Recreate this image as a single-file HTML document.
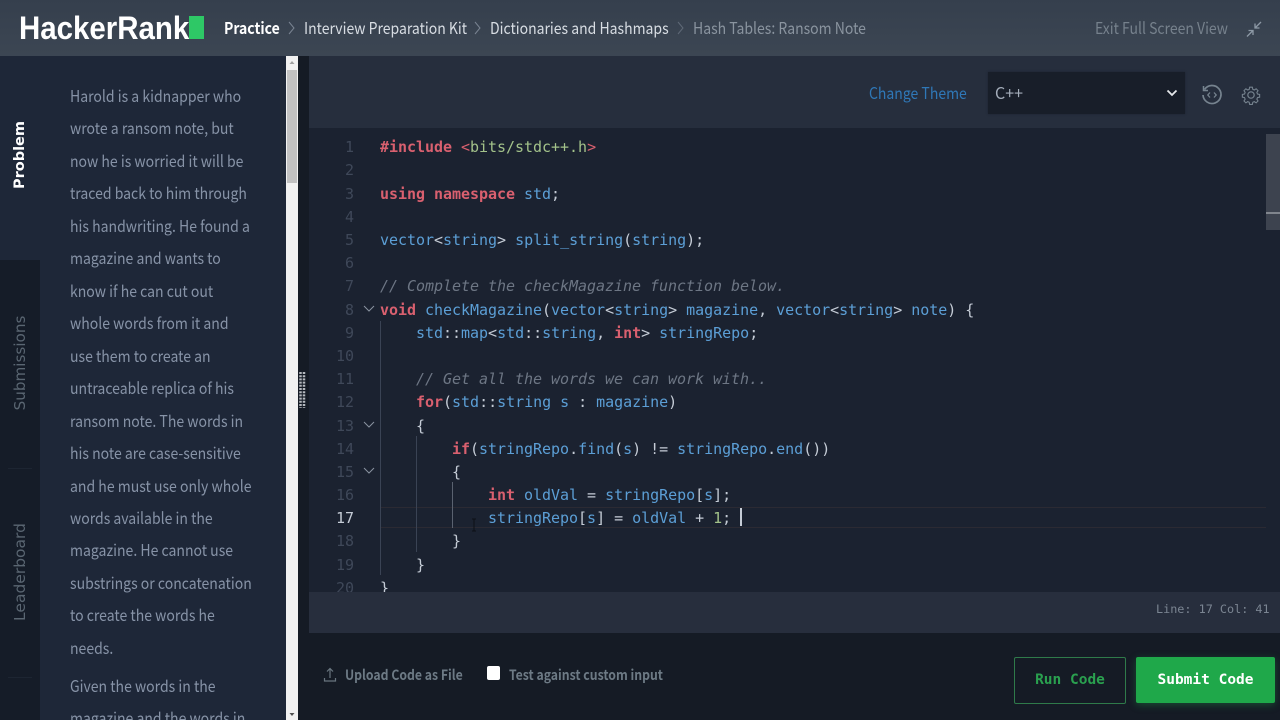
<!DOCTYPE html>
<html><head><meta charset="utf-8"><style>
html,body{margin:0;padding:0;background:#151b25}
#r{position:relative;width:1280px;height:720px;overflow:hidden;background:#151b25;font-family:"Noto Sans CJK JP","Liberation Sans",sans-serif}
#r div,#r svg{position:absolute}
.t{white-space:nowrap}
.sx{transform:scaleX(.875);transform-origin:0 50%}
.nav{top:16px;font-size:16px;line-height:22px;color:#d8dde3;white-space:nowrap;transform:scaleX(.875);transform-origin:0 50%}
.p{left:70px;font-size:16px;line-height:24px;color:#8793a7;white-space:nowrap;transform:scaleX(.877);transform-origin:0 50%}
.ln{left:320px;width:34px;text-align:right;font:15px/23px "DejaVu Sans Mono",monospace;color:#3f4859;letter-spacing:-.03px}
.c{left:380px;font:15px/23px "DejaVu Sans Mono",monospace;color:#5c9fd6;white-space:pre;letter-spacing:-.03px}
.k{color:#d9606f;font-weight:bold}.w{color:#c5ccd6}.g{color:#6d7684;font-style:italic}.s{color:#a3c28a}
.v{transform:rotate(-90deg);transform-origin:center;white-space:nowrap;text-align:center;width:120px;height:24px;line-height:24px;left:-40px}
.guide{width:1px;background:#3a4354}
</style></head><body><div id="r">
<div style="left:0;top:0;width:1280px;height:56px;background:linear-gradient(#353f4d,#3c4653)"></div>
<div class="t" style="left:19px;top:8px;font:bold 32px/40px 'Liberation Sans',sans-serif;color:#fff;transform:scaleX(.92);transform-origin:0 50%">HackerRank</div>
<div style="left:189px;top:16px;width:15px;height:23px;background:#2ec866"></div>
<div class="nav" style="left:224px;color:#fff;font-weight:bold">Practice</div>
<svg style="left:288px;top:21px" width="8" height="14" viewBox="0 0 8 14"><path d="M1 1l5 6-5 6" fill="none" stroke="#7a8492"/></svg>
<div class="nav" style="left:304px">Interview Preparation Kit</div>
<svg style="left:474px;top:21px" width="8" height="14" viewBox="0 0 8 14"><path d="M1 1l5 6-5 6" fill="none" stroke="#7a8492"/></svg>
<div class="nav" style="left:490px">Dictionaries and Hashmaps</div>
<svg style="left:677px;top:21px" width="8" height="14" viewBox="0 0 8 14"><path d="M1 1l5 6-5 6" fill="none" stroke="#5f6977"/></svg>
<div class="nav" style="left:693px;color:#8a949f">Hash Tables: Ransom Note</div>
<div class="nav" style="left:1095px;color:#76818c">Exit Full Screen View</div>
<svg style="left:1246px;top:20px" width="16" height="18" viewBox="0 0 16 18" fill="none" stroke="#8d99a5" stroke-width="1.3"><path d="M15 2L9 8M9 3.500V8h4.500M1 16.500l6-6M2.500 10.500H7V15"/></svg>

<div style="left:0;top:56px;width:286px;height:664px;background:#1e2738"></div>
<div style="left:0;top:260px;width:40px;height:460px;background:#151c28"></div>
<div style="left:8px;top:468px;width:24px;height:1px;background:#1d2532"></div>
<div style="left:8px;top:677px;width:24px;height:1px;background:#1d2532"></div>
<div class="v" style="top:143px;color:#fff;font:bold 14.500px/24px 'DejaVu Sans',sans-serif">Problem</div>
<div class="v" style="top:351px;color:#5a6672;font:15.200px/24px 'DejaVu Sans',sans-serif">Submissions</div>
<div class="v" style="top:560px;color:#5a6672;font:15.500px/24px 'DejaVu Sans',sans-serif">Leaderboard</div>

<div class="p" style="top:83px">Harold is a kidnapper who</div>
<div class="p" style="top:115px">wrote a ransom note, but</div>
<div class="p" style="top:148px">now he is worried it will be</div>
<div class="p" style="top:180px">traced back to him through</div>
<div class="p" style="top:213px">his handwriting. He found a</div>
<div class="p" style="top:245px">magazine and wants to</div>
<div class="p" style="top:278px">know if he can cut out</div>
<div class="p" style="top:310px">whole words from it and</div>
<div class="p" style="top:343px">use them to create an</div>
<div class="p" style="top:375px">untraceable replica of his</div>
<div class="p" style="top:408px">ransom note. The words in</div>
<div class="p" style="top:440px">his note are case-sensitive</div>
<div class="p" style="top:473px">and he must use only whole</div>
<div class="p" style="top:505px">words available in the</div>
<div class="p" style="top:537px">magazine. He cannot use</div>
<div class="p" style="top:570px">substrings or concatenation</div>
<div class="p" style="top:602px">to create the words he</div>
<div class="p" style="top:635px">needs.</div>
<div class="p" style="top:673px">Given the words in the</div>
<div class="p" style="top:705px">magazine and the words in</div>

<div style="left:286px;top:56px;width:12px;height:664px;background:#f1f1f1"></div>
<div style="left:287px;top:70px;width:10px;height:113px;background:#c1c1c1"></div>
<svg style="left:286px;top:58px" width="12" height="8"><path d="M3.500 6L6 3l2.500 3z" fill="#a0a0a0"/></svg>
<svg style="left:286px;top:711px" width="12" height="8"><path d="M3.500 2L6 5l2.500-3z" fill="#505050"/></svg>
<div style="left:298px;top:56px;width:11px;height:664px;background:#151b25"></div>
<svg style="left:299px;top:371px" width="8" height="38"><path d="M1.500 1v36M5 1v36" stroke="#b4b8bd" stroke-width="2.500" stroke-dasharray="2 1.200" fill="none"/></svg>

<div style="left:309px;top:56px;width:971px;height:72px;background:#262e3d"></div>
<div class="t sx" style="left:869px;top:80px;font-size:16px;line-height:24px;color:#2f78b8">Change Theme</div>
<div style="left:988px;top:72px;width:197px;height:42px;background:#181e29;box-shadow:0 0 2px #1b2130"></div>
<div class="t" style="left:995px;top:80px;font-size:16px;line-height:24px;color:#a4adba">C++</div>
<svg style="left:1166px;top:89px" width="12" height="8" viewBox="0 0 12 8"><path d="M1.500 1.500L6 6l4.500-4.500" fill="none" stroke="#e6e8eb" stroke-width="1.800"/></svg>
<svg style="left:1201px;top:84px" width="22" height="22" viewBox="0 0 22 22" fill="none" stroke="#76838f" stroke-width="1.700"><path d="M3.500 5.500A9 9 0 1 1 2 11"/><path d="M2.500 2v4.500H7" stroke-width="1.500"/><path d="M9 8.500L6.800 11 9 13.500M13 8.500l2.200 2.500-2.200 2.500" stroke-width="1.300"/></svg>
<svg style="left:1241px;top:85px" width="20" height="20" viewBox="0 0 20 20" fill="none" stroke="#76838f" stroke-width="1.200"><circle cx="10" cy="10" r="3.200"/><path d="M8.500 1.300h3l.5 2.400 1.700.7 2-1.300 2.100 2.100-1.300 2 .7 1.700 2.400.5v3l-2.400.5-.7 1.700 1.300 2-2.100 2.100-2-1.300-1.700.7-.5 2.400h-3l-.5-2.400-1.700-.7-2 1.300-2.100-2.100 1.300-2-.7-1.700-2.400-.5v-3l2.400-.5.7-1.700-1.300-2 2.100-2.100 2 1.300 1.700-.7z" transform="translate(1 1) scale(.9)"/></svg>

<div style="left:309px;top:128px;width:971px;height:464px;background:#1b2230;overflow:hidden"></div>
<div style="left:1266px;top:134px;width:14px;height:96px;background:#3d434f"></div>
<div style="left:1266px;top:212px;width:14px;height:2px;background:#80858d"></div>
<div style="left:380px;top:507px;width:886px;height:1px;background:#2b2a33"></div>
<div style="left:380px;top:527px;width:886px;height:1px;background:#2b2a33"></div>

<div class="guide" style="left:380px;top:321px;height:254px"></div>
<div class="guide" style="left:416px;top:436px;height:116px"></div>
<div class="guide" style="left:452px;top:482px;height:46px;background:#5a6270"></div>

<div class="ln" style="top:136px">1</div><div class="ln" style="top:159px">2</div><div class="ln" style="top:183px">3</div><div class="ln" style="top:206px">4</div><div class="ln" style="top:229px">5</div><div class="ln" style="top:252px">6</div><div class="ln" style="top:275px">7</div><div class="ln" style="top:299px">8</div><div class="ln" style="top:322px">9</div><div class="ln" style="top:345px">10</div><div class="ln" style="top:368px">11</div><div class="ln" style="top:391px">12</div><div class="ln" style="top:415px">13</div><div class="ln" style="top:438px">14</div><div class="ln" style="top:461px">15</div><div class="ln" style="top:484px">16</div><div class="ln" style="top:507px;color:#c5ccd6">17</div><div class="ln" style="top:530px">18</div><div class="ln" style="top:554px">19</div>

<svg style="left:363px;top:304px" width="12" height="9"><path d="M1 2l5 5 5-5" fill="none" stroke="#8a93a0"/></svg>
<svg style="left:363px;top:420px" width="12" height="9"><path d="M1 2l5 5 5-5" fill="none" stroke="#8a93a0"/></svg>
<svg style="left:363px;top:466px" width="12" height="9"><path d="M1 2l5 5 5-5" fill="none" stroke="#8a93a0"/></svg>

<div class="c" style="top:136px"><span class="k">#include</span> <span class="k" style="font-weight:normal">&lt;</span><span class="s">bits/stdc++.h</span><span class="k" style="font-weight:normal">&gt;</span></div>
<div class="c" style="top:183px"><span class="k">using namespace</span> std<span class="w">;</span></div>
<div class="c" style="top:229px">vector<span class="w">&lt;</span>string<span class="w">&gt;</span> split_string<span class="w">(</span>string<span class="w">);</span></div>
<div class="c g" style="top:275px">// Complete the checkMagazine function below.</div>
<div class="c" style="top:299px"><span class="k">void</span> checkMagazine<span class="w">(</span>vector<span class="w">&lt;</span>string<span class="w">&gt;</span> magazine<span class="w">,</span> vector<span class="w">&lt;</span>string<span class="w">&gt;</span> note<span class="w">) {</span></div>
<div class="c" style="top:322px">    std<span class="w">::</span>map<span class="w">&lt;</span>std<span class="w">::</span>string<span class="w">,</span> <span class="k">int</span><span class="w">&gt;</span> stringRepo<span class="w">;</span></div>
<div class="c g" style="top:368px">    // Get all the words we can work with..</div>
<div class="c" style="top:391px">    <span class="k">for</span><span class="w">(</span>std<span class="w">::</span>string s <span class="w">:</span> magazine<span class="w">)</span></div>
<div class="c w" style="top:415px">    {</div>
<div class="c" style="top:438px">        <span class="k">if</span><span class="w">(</span>stringRepo<span class="w">.</span>find<span class="w">(</span>s<span class="w">) != </span>stringRepo<span class="w">.</span>end<span class="w">())</span></div>
<div class="c w" style="top:461px">        {</div>
<div class="c" style="top:484px">            <span class="k">int</span> oldVal <span class="w">=</span> stringRepo<span class="w">[</span>s<span class="w">];</span></div>
<div class="c" style="top:507px">            stringRepo<span class="w">[</span>s<span class="w">] =</span> oldVal <span class="w">+</span> <span class="s">1</span><span class="w">;</span></div>
<div class="c w" style="top:530px">        }</div>
<div class="c w" style="top:554px">    }</div>
<div style="left:740px;top:508px;width:2px;height:18px;background:#c5ccd6"></div>
<svg style="left:471px;top:518px" width="6" height="15"><path d="M1 1h4M3 1v12M1 13h4" stroke="#0d1016" stroke-width="1" fill="none"/></svg>
<div style="left:320px;top:578px;width:80px;height:14px;overflow:hidden"><div class="ln" style="left:0;top:-1px">20</div><div class="c w" style="left:60px;top:-1px">}</div></div>

<div style="left:309px;top:592px;width:971px;height:41px;background:#272e3d"></div>
<div class="t" style="left:1156px;top:600px;font:11.800px/18px 'DejaVu Sans Mono',monospace;color:#7b8592">Line: 17 Col: 41</div>

<svg style="left:323px;top:667px" width="14" height="16" viewBox="0 0 14 16" fill="none" stroke="#69757f" stroke-width="1.200"><path d="M7 11V2M4 4.500L7 1.500l3 3M1.500 11v3h11v-3"/></svg>
<div class="t sx" style="left:345px;top:665px;font-size:14px;line-height:20px;font-weight:bold;color:#6d7a85">Upload Code as File</div>
<div style="left:487px;top:666px;width:13px;height:14px;background:#fff;border-radius:2px"></div>
<div class="t sx" style="left:509px;top:665px;font-size:14px;line-height:20px;font-weight:bold;color:#6d7a85">Test against custom input</div>

<div style="left:1014px;top:657px;width:110px;height:45px;border:1px solid #2f7a4a;border-radius:2px"></div>
<div class="t" style="left:1014px;top:669px;width:112px;text-align:center;font:bold 14.500px/22px 'DejaVu Sans Mono',monospace;color:#2aa04f">Run Code</div>
<div style="left:1136px;top:657px;width:139px;height:46px;background:#1fa84a;border-radius:2px;box-shadow:0 2px 8px rgba(31,168,74,.35)"></div>
<div class="t" style="left:1136px;top:669px;width:139px;text-align:center;font:bold 14.500px/22px 'DejaVu Sans Mono',monospace;color:#fff">Submit Code</div>
</div></body></html>
